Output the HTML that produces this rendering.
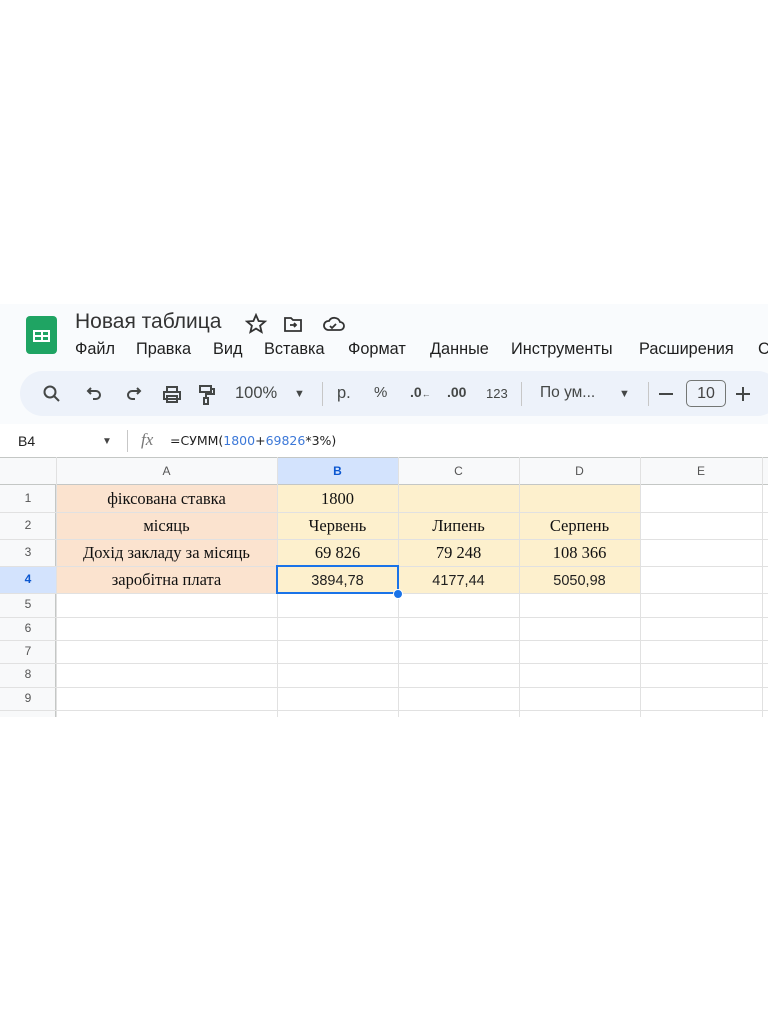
<!DOCTYPE html>
<html><head><meta charset="utf-8"><style>
*{margin:0;padding:0;box-sizing:border-box}
body{width:768px;height:1024px;background:#fff;position:relative;overflow:hidden;font-family:"Liberation Sans","DejaVu Sans",sans-serif;color:#1f1f1f}
.a{position:absolute}
.app{left:0;top:304px;width:768px;height:120px;background:#f9fbfd}
.menu{top:340px;font-size:16.3px;color:#1f1f1f;white-space:nowrap}
.pill{left:20px;top:371px;width:760px;height:45px;background:#edf2fa;border-radius:23px}
.tb{top:384px;font-size:16.5px;color:#444746}
.grid div{position:absolute}
.ser{font-family:"Liberation Serif",serif;font-size:16.5px;color:#111;text-align:center}
.hd{font-size:12px;color:#555;text-align:center}
</style></head><body>
<div class="a app"></div>
<div class="a" style="left:26px;top:316px;width:31px;height:38px;background:#1fa463;border-radius:4px"></div>
<div class="a" style="left:33px;top:330px;width:17px;height:12px;border:2px solid #fff;background:#1fa463"></div>
<div class="a" style="left:33px;top:335px;width:17px;height:2px;background:#fff"></div>
<div class="a" style="left:41px;top:330px;width:2px;height:12px;background:#fff"></div>
<div class="a" style="left:75px;top:310px;font-size:21px;color:#333">Новая таблица</div>
<svg class="a" style="left:245px;top:313px" width="110" height="22" viewBox="0 0 110 22" fill="none" stroke="#333" stroke-width="1.8">
<path d="M11 2l2.6 6 6.4.5-4.9 4.2 1.5 6.3L11 15.6 5.4 19l1.5-6.3L2 8.5 8.4 8z"/>
<path d="M40 5h6l2 2h8v11H40z M45 12h6 M49 10l2 2-2 2"/>
<path d="M83 17h12a4 4 0 0 0 0-8 6 6 0 0 0-11-1 4.5 4.5 0 0 0-1 9z M85 13l2 2 4-4"/>
</svg>
<div class="a menu" style="left:75px">Файл</div>
<div class="a menu" style="left:136px">Правка</div>
<div class="a menu" style="left:213px">Вид</div>
<div class="a menu" style="left:264px">Вставка</div>
<div class="a menu" style="left:348px">Формат</div>
<div class="a menu" style="left:430px">Данные</div>
<div class="a menu" style="left:511px">Инструменты</div>
<div class="a menu" style="left:639px">Расширения</div>
<div class="a menu" style="left:758px">С</div>
<div class="a pill"></div>
<svg class="a" style="left:40px;top:382px" width="180" height="24" viewBox="0 0 180 24" fill="none" stroke="#444746" stroke-width="2">
<circle cx="10" cy="10" r="5.5"/><path d="M14 14l5 5"/>
<path d="M53 17h3a4 4 0 0 0 0-8h-8 M51 6l-3 3 3 3"/>
<path d="M95 17h-3a4 4 0 0 1 0-8h8 M97 6l3 3-3 3"/>
<path d="M124 10h16v7h-16z M127 10V5h10v5 M127 14h10v6h-10z"/>
<path d="M160 4h11v6h-11z M171 7h3v5h-8v4 M164 16h4v6h-4z"/>
</svg>
<div class="a tb" style="left:235px">100%</div>
<div class="a tb" style="left:294px;font-size:11px;top:388px">▼</div>
<div class="a" style="left:322px;top:382px;width:1px;height:24px;background:#c7c7c7"></div>
<div class="a tb" style="left:337px">р.</div>
<div class="a tb" style="left:374px;font-size:15px">%</div>
<div class="a tb" style="left:410px;font-size:14px;font-weight:bold">.0<span style="font-size:9px">←</span></div>
<div class="a tb" style="left:447px;font-size:14px;font-weight:bold">.00</div>
<div class="a tb" style="left:486px;font-size:13px;top:386px">123</div>
<div class="a" style="left:521px;top:382px;width:1px;height:24px;background:#c7c7c7"></div>
<div class="a tb" style="left:540px;font-size:15.5px">По ум...</div>
<div class="a tb" style="left:619px;font-size:11px;top:388px">▼</div>
<div class="a" style="left:648px;top:382px;width:1px;height:24px;background:#c7c7c7"></div>
<div class="a" style="left:659px;top:393px;width:14px;height:2px;background:#444746"></div>
<div class="a" style="left:686px;top:380px;width:40px;height:27px;border:1px solid #747775;border-radius:5px;font-size:16px;text-align:center;line-height:25px;color:#444">10</div>
<div class="a" style="left:736px;top:393px;width:14px;height:2px;background:#444746"></div>
<div class="a" style="left:742px;top:387px;width:2px;height:14px;background:#444746"></div>
<div class="a" style="left:18px;top:433px;font-size:14px">B4</div>
<div class="a" style="left:102px;top:436px;font-size:10px;color:#444">▼</div>
<div class="a" style="left:127px;top:430px;width:1px;height:22px;background:#c7c7c7"></div>
<div class="a" style="left:141px;top:430px;font-family:'Liberation Serif',serif;font-style:italic;font-size:17px;color:#777">fx</div>
<div class="a" style="left:170px;top:433px;font-family:'DejaVu Sans',sans-serif;font-size:12.5px">=СУММ(<span style="color:#3c78d8">1800</span>+<span style="color:#3c78d8">69826</span>*3%)</div>
<div class="grid">
<div style="left:0;top:457px;width:768px;height:28px;background:#f8f9fa;border-top:1px solid #c4c7c5;border-bottom:1px solid #c4c7c5"></div>
<div style="left:277px;top:458px;width:121px;height:26px;background:#d3e3fd"></div>
<div style="left:0;top:485px;width:56px;height:232px;background:#f8f9fa;border-right:1px solid #c4c7c5"></div>
<div style="left:0;top:566px;width:56px;height:27px;background:#d3e3fd"></div>
<div style="left:56px;top:485px;width:221px;height:108px;background:#fbe3cf"></div>
<div style="left:277px;top:485px;width:363px;height:108px;background:#fdf0cd"></div>
</div>
<svg class="a" style="left:0;top:457px" width="768" height="262">
<g stroke="#e1e1e1" stroke-width="1">
<path d="M56.5 0V262 M277.5 0V262 M398.5 0V262 M519.5 0V262 M640.5 0V262 M762.5 0V262"/>
<path d="M0 55.5H768 M0 82.5H768 M0 109.5H768 M0 136.5H768 M0 160.5H768 M0 183.5H768 M0 206.5H768 M0 230.5H768 M0 253.5H768"/>
</g>
<rect x="277" y="109" width="121" height="27" fill="none" stroke="#1a73e8" stroke-width="2"/>
<circle cx="398" cy="137" r="4.5" fill="#1a73e8" stroke="#fff" stroke-width="1"/>
</svg>
<div class="a hd" style="left:56px;top:464px;width:221px">A</div>
<div class="a hd" style="left:277px;top:464px;width:121px;font-weight:bold;color:#0b57d0">B</div>
<div class="a hd" style="left:398px;top:464px;width:121px">C</div>
<div class="a hd" style="left:519px;top:464px;width:121px">D</div>
<div class="a hd" style="left:640px;top:464px;width:122px">E</div>
<div class="a hd" style="left:0;top:491px;width:56px">1</div>
<div class="a hd" style="left:0;top:518px;width:56px">2</div>
<div class="a hd" style="left:0;top:545px;width:56px">3</div>
<div class="a hd" style="left:0;top:572px;width:56px;font-weight:bold;color:#0b57d0">4</div>
<div class="a hd" style="left:0;top:597px;width:56px">5</div>
<div class="a hd" style="left:0;top:621px;width:56px">6</div>
<div class="a hd" style="left:0;top:644px;width:56px">7</div>
<div class="a hd" style="left:0;top:667px;width:56px">8</div>
<div class="a hd" style="left:0;top:691px;width:56px">9</div>
<div class="a ser" style="left:56px;top:489px;width:221px">фіксована ставка</div>
<div class="a ser" style="left:277px;top:489px;width:121px">1800</div>
<div class="a ser" style="left:56px;top:516px;width:221px">місяць</div>
<div class="a ser" style="left:277px;top:516px;width:121px">Червень</div>
<div class="a ser" style="left:398px;top:516px;width:121px">Липень</div>
<div class="a ser" style="left:519px;top:516px;width:121px">Серпень</div>
<div class="a ser" style="left:56px;top:543px;width:221px">Дохід закладу за місяць</div>
<div class="a ser" style="left:277px;top:543px;width:121px">69 826</div>
<div class="a ser" style="left:398px;top:543px;width:121px">79 248</div>
<div class="a ser" style="left:519px;top:543px;width:121px">108 366</div>
<div class="a ser" style="left:56px;top:570px;width:221px">заробітна плата</div>
<div class="a" style="left:277px;top:573px;width:121px;text-align:center;font-size:14.5px">3894,78</div>
<div class="a" style="left:398px;top:573px;width:121px;text-align:center;font-size:14.5px">4177,44</div>
<div class="a" style="left:519px;top:573px;width:121px;text-align:center;font-size:14.5px">5050,98</div>
<div class="a" style="left:0;top:717px;width:768px;height:307px;background:#fff"></div>
</body></html>
